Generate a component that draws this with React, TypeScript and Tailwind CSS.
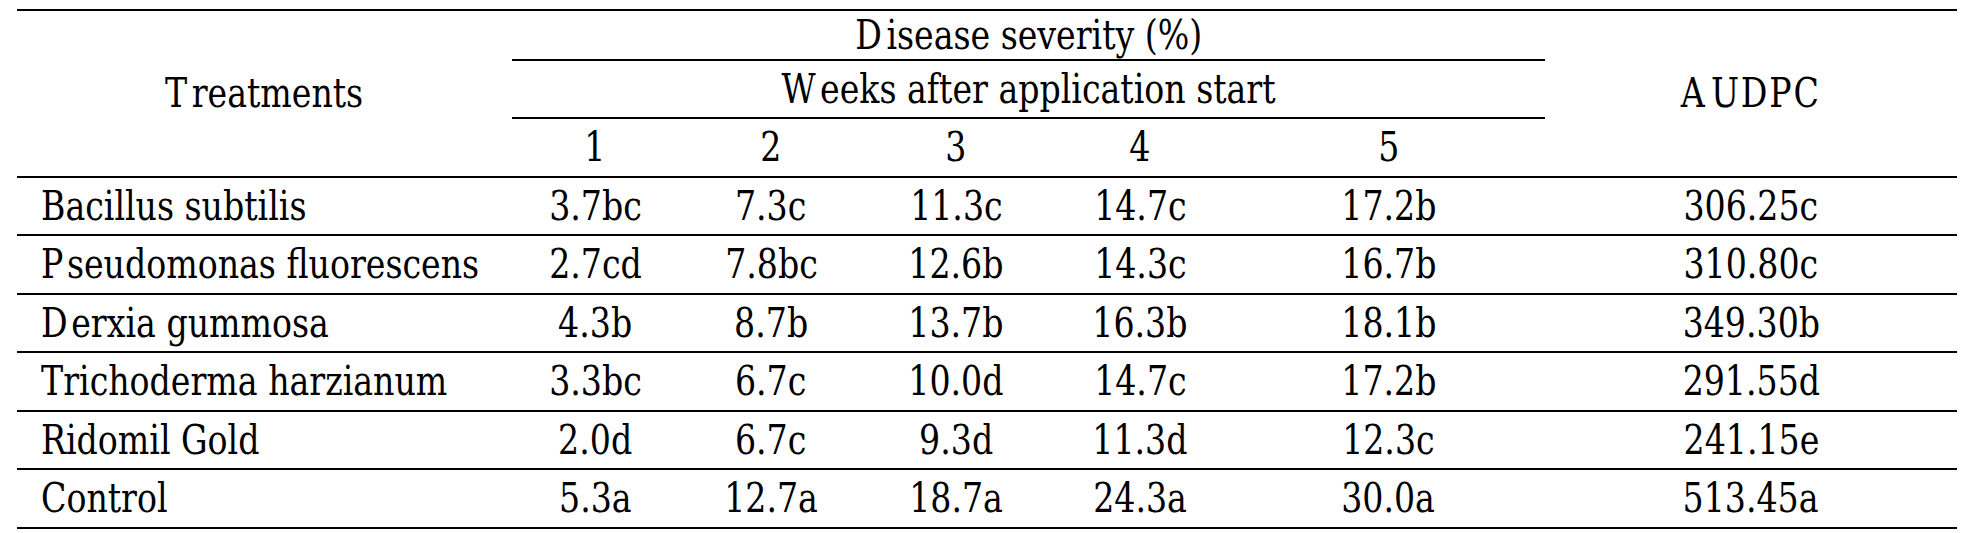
import React from "react";

const rows: { name: React.ReactNode; v: string[]; h: string }[] = [
  { name: "Bacillus subtilis", v: ["3.7bc", "7.3c", "11.3c", "14.7c", "17.2b", "306.25c"], h: "h-[58px]" },
  {
    name: (
      <>
        <span className="mr-[4px]">P</span>seudomonas fluorescens
      </>
    ),
    v: ["2.7cd", "7.8bc", "12.6b", "14.3c", "16.7b", "310.80c"],
    h: "h-[59px]",
  },
  {
    name: (
      <>
        <span className="mr-[4px]">D</span>erxia gummosa
      </>
    ),
    v: ["4.3b", "8.7b", "13.7b", "16.3b", "18.1b", "349.30b"],
    h: "h-[58px]",
  },
  { name: "Trichoderma harzianum", v: ["3.3bc", "6.7c", "10.0d", "14.7c", "17.2b", "291.55d"], h: "h-[59px]" },
  { name: "Ridomil Gold", v: ["2.0d", "6.7c", "9.3d", "11.3d", "12.3c", "241.15e"], h: "h-[58px]" },
  { name: "Control", v: ["5.3a", "12.7a", "18.7a", "24.3a", "30.0a", "513.45a"], h: "h-[59px]" },
];

const grid = "grid grid-cols-[495px_166px_186px_184px_184px_313px_412px]";
const txt = "inline-block whitespace-nowrap scale-x-[0.9]";

export default function App() {
  return (
    <div className="w-[1969px] h-[533px] bg-white text-black pt-[9px] pl-[17px] text-[41px] leading-none font-[family-name:'DejaVu_Serif_Condensed','DejaVu_Serif',serif]">
      <div className="w-[1940px] border-t-2 border-black">
        {/* Header */}
        <div className={`${grid} grid-rows-[50px_58px_57px] border-b-2 border-black`}>
          <div className="col-start-1 row-start-1 row-span-3 flex items-center justify-center">
            <span className={txt}>
              <span className="mr-[5px]">T</span>reatments
            </span>
          </div>
          <div className="col-start-2 col-span-5 row-start-1 border-b-2 border-black flex items-center justify-center">
            <span className={txt}>
              <span className="mr-[5px]">D</span>isease severity (%)
            </span>
          </div>
          <div className="col-start-2 col-span-5 row-start-2 border-b-2 border-black flex items-center justify-center">
            <span className={txt}>
              <span className="mr-[5px]">W</span>eeks after application start
            </span>
          </div>
          <div className="col-start-2 row-start-3 flex items-center justify-center">
            <span className={txt}>1</span>
          </div>
          <div className="col-start-3 row-start-3 flex items-center justify-center">
            <span className={txt}>2</span>
          </div>
          <div className="col-start-4 row-start-3 flex items-center justify-center">
            <span className={txt}>3</span>
          </div>
          <div className="col-start-5 row-start-3 flex items-center justify-center">
            <span className={txt}>4</span>
          </div>
          <div className="col-start-6 row-start-3 flex items-center justify-center">
            <span className={txt}>5</span>
          </div>
          <div className="col-start-7 row-start-1 row-span-3 flex items-center justify-center">
            <span className={`${txt} tracking-[2px]`}>
              <span className="mr-[5px]">A</span>UDPC
            </span>
          </div>
        </div>
        {/* Body */}
        {rows.map((r, idx) => (
          <div key={idx} className={`${grid} ${r.h} border-b-2 border-black items-center`}>
            <div className="pl-[24px]">
              <span className={`${txt} origin-left`}>{r.name}</span>
            </div>
            {r.v.map((x, j) => (
              <div key={j} className="flex justify-center">
                <span className={txt}>{x}</span>
              </div>
            ))}
          </div>
        ))}
      </div>
    </div>
  );
}
